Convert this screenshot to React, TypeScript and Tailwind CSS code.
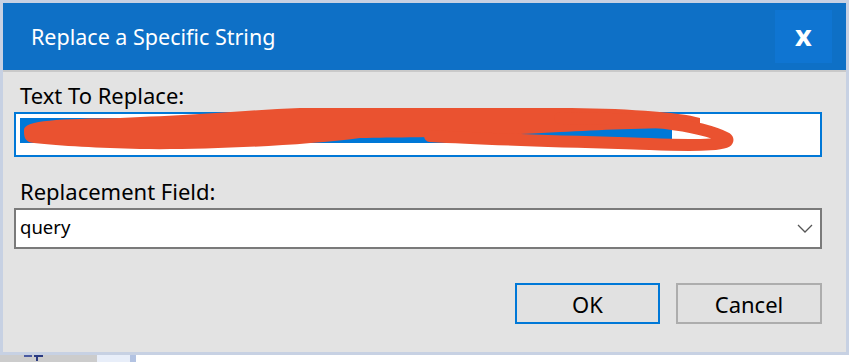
import React from 'react';

const font = "font-['Noto_Sans','Open_Sans',sans-serif]";

const Scribble: React.FC = () => (
  <svg className="absolute left-0 top-0 pointer-events-none" width="860" height="362" viewBox="0 0 860 362">
    <path
      d="M24 130 C24 120 60 119 120 118 C200 115 250 110 300 108 L560 108 C620 108 680 112 700 118 L700 128 C640 128 600 130 560 132 C450 138 400 137 360 138 C300 146 200 150 140 149 C100 148 60 146 34 143 C24 142 24 136 24 130 Z"
      fill="#ea5230"
    />
    <path
      d="M560 118 C650 118 700 125 726 138 C735 145 700 146 650 144 C580 142 500 140 430 136"
      fill="none"
      stroke="#ea5230"
      strokeWidth="12"
      strokeLinecap="round"
    />
  </svg>
);

export default function App() {
  return (
    <div className={`relative w-[860px] h-[362px] bg-white overflow-hidden flex flex-col items-start ${font}`}>
      <div className="w-[849px] h-[355px] border-[3px] border-[#c7d1e3] flex flex-col">
        {/* title bar */}
        <div className="h-[67px] bg-[#0e70c6] flex items-center justify-between">
          <span className="pl-[28px] text-white text-[21.5px] leading-none">Replace a Specific String</span>
          <button className="mr-[14px] w-[57px] h-[53px] bg-[#0f75d2] flex items-center justify-center text-white font-bold text-[29px] leading-none pb-[4px]">
            x
          </button>
        </div>
        <div className="h-[2px] bg-[#c9c9c9]" />

        {/* body */}
        <div className="flex-1 bg-[#e3e3e3] flex flex-col px-[11px]">
          <label className="mt-[9px] h-[28px] leading-[28px] text-[22px] text-black pl-[6px]">Text To Replace:</label>
          <div className="mt-[3px] h-[45px] w-[808px] border-2 border-[#0078d7] bg-white pt-[4px] pl-[4px]">
            <div className="h-[25px] w-[652px] bg-[#0078d7]" />
          </div>

          <label className="mt-[20px] h-[28px] leading-[28px] text-[22px] text-black pl-[6px]">Replacement Field:</label>
          <div className="mt-[3px] h-[41px] w-[808px] border-2 border-[#7a7a7a] bg-white flex items-center justify-between pl-[4px] pr-[7px]">
            <span className="text-[18.5px] text-black leading-none pb-[2px]">query</span>
            <svg width="16" height="9" viewBox="0 0 16 9">
              <polyline points="1,1 8,8 15,1" fill="none" stroke="#555" strokeWidth="1.3" />
            </svg>
          </div>

          <div className="mt-[34px] w-[808px] flex justify-end gap-[16px]">
            <button className="w-[145px] h-[41px] border-2 border-[#0078d7] bg-[#e1e1e1] text-[22px] text-black leading-none">OK</button>
            <button className="w-[146px] h-[41px] border-2 border-[#adadad] bg-[#e1e1e1] text-[22px] text-black leading-none">Cancel</button>
          </div>
        </div>
      </div>

      {/* strip of the window below */}
      <div className="h-[7px] w-full flex">
        <div className="w-[97px] bg-[#cccccc] relative">
          <div className="absolute left-[24px] top-0 w-[8px] h-[2px] bg-[#4a5aa0]" />
          <div className="absolute left-[34px] top-0 w-[9px] h-[2px] bg-[#2a3a80]" />
          <div className="absolute left-[36px] top-0 w-[2px] h-[6px] bg-[#2a3a80]" />
        </div>
        <div className="w-[33px] bg-[#e8eef9]" />
        <div className="w-[6px] bg-[#b3c3e2]" />
        <div className="flex-1 bg-white" />
      </div>

      <Scribble />
    </div>
  );
}
